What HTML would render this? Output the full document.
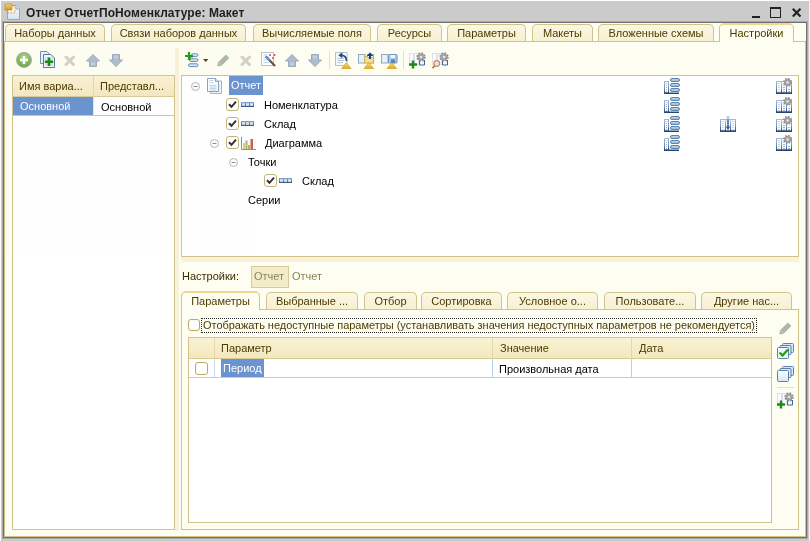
<!DOCTYPE html>
<html><head><meta charset="utf-8">
<style>
*{box-sizing:border-box;margin:0;padding:0}
html,body{width:810px;height:541px;overflow:hidden;background:#cbcbcb}
body{font-family:"Liberation Sans",sans-serif;font-size:11px;color:#000;position:relative}
#root{position:absolute;left:0;top:0;width:810px;height:541px;background:#cbcbcb;will-change:transform;opacity:0.999}
.abs{position:absolute}
.t{position:absolute;white-space:nowrap;line-height:13px;height:13px}
#title{left:26px;top:6px;font-size:12px;font-weight:bold;letter-spacing:0.05px;color:#1e1e1e;line-height:14px;height:14px}
#frame{left:2px;top:21px;width:806px;height:518px;background:#a9a9a9}
#frame2{left:3px;top:22px;width:804px;height:516px;background:#6f6f6f}
#page{left:4px;top:23px;width:802px;height:514px;background:#fefdf1}
#pageb{left:4px;top:41px;width:802px;height:496px;border:1px solid #d2c38a}
#frameL{left:4px;top:22px;width:1px;height:515px;background:#fff}
.tab{position:absolute;top:24px;height:17px;border:1px solid #d2c38a;border-bottom:none;border-radius:5px 5px 0 0;background:linear-gradient(#fbf7e3,#f7f0d2);color:#4b3b00;text-align:center;line-height:16px;white-space:nowrap}
.tab.act{background:#fefdf1;top:23px;height:19px;line-height:17px;z-index:3;border-top:2px solid #f0d791}
.itab{position:absolute;top:292px;height:17px;border:1px solid #d2c38a;border-bottom:none;border-radius:5px 5px 0 0;background:linear-gradient(#fbf7e3,#f7f0d2);color:#4b3b00;text-align:center;line-height:17px;white-space:nowrap}
.itab.act{background:#fefdf1;top:291px;height:19px;line-height:17px;z-index:3;border-top:2px solid #f0d791}
.box{position:absolute;background:#fff;border:1px solid #d2c38a}
.hdr{position:absolute;background:linear-gradient(#f9f2d3,#f3e8bd);color:#4b3b00;border-right:1px solid #e2d8aa;border-bottom:1px solid #d8ca94;line-height:20px;padding-left:6px;white-space:nowrap;overflow:hidden}
.sel{position:absolute;background:#6a93d0;color:#fff;line-height:19px;white-space:nowrap}
.cb{position:absolute;width:13px;height:13px;border:1px solid #b9a866;border-radius:3px;background:#fff}
</style></head><body><div id="root">

<svg width="0" height="0" style="position:absolute">
<defs>
<radialGradient id="gGreen" cx="0.5" cy="0.35" r="0.7"><stop offset="0" stop-color="#b4dc8c"/><stop offset="0.600" stop-color="#7fba55"/><stop offset="1" stop-color="#5f9e3c"/></radialGradient>
<linearGradient id="gPill" x1="0" y1="0" x2="0" y2="1"><stop offset="0" stop-color="#7fa0c0"/><stop offset="0.450" stop-color="#c9dcec"/><stop offset="0.600" stop-color="#b5cce0"/><stop offset="1" stop-color="#6b90b3"/></linearGradient>
<linearGradient id="gDoc" x1="0" y1="0" x2="0" y2="1"><stop offset="0" stop-color="#ffffff"/><stop offset="1" stop-color="#d5e4f3"/></linearGradient>
<linearGradient id="gCol" x1="0" y1="0" x2="0" y2="1"><stop offset="0" stop-color="#eef3f9"/><stop offset="1" stop-color="#b9cbe0"/></linearGradient>
<linearGradient id="gGold" x1="0" y1="0" x2="0" y2="1"><stop offset="0" stop-color="#f3d36a"/><stop offset="1" stop-color="#cf962a"/></linearGradient>
<linearGradient id="gFld" x1="0" y1="0" x2="0" y2="1"><stop offset="0" stop-color="#86a5cb"/><stop offset="0.700" stop-color="#5478a6"/><stop offset="1" stop-color="#2f507a"/></linearGradient>
<linearGradient id="gBord" x1="0" y1="0" x2="0" y2="1"><stop offset="0" stop-color="#a3bbd8"/><stop offset="0.600" stop-color="#6f8fb8"/><stop offset="1" stop-color="#27466f"/></linearGradient>
<linearGradient id="gTri" x1="0" y1="0" x2="0" y2="1"><stop offset="0" stop-color="#fbe27a"/><stop offset="1" stop-color="#e0a820"/></linearGradient>

<symbol id="iUp" viewBox="0 0 14 13"><path d="M7 0.5 L13.5 7 H10.5 V12.5 H3.5 V7 H0.5 Z" fill="#aebccb" stroke="#9aabbd" stroke-width="1" stroke-linejoin="round"/><rect x="5" y="8.5" width="4" height="3" fill="#c3ced9"/></symbol>
<symbol id="iDown" viewBox="0 0 14 13"><path d="M7 12.5 L13.5 6 H10.5 V0.5 H3.5 V6 H0.5 Z" fill="#aebccb" stroke="#9aabbd" stroke-width="1" stroke-linejoin="round"/><rect x="5" y="1.5" width="4" height="3" fill="#c3ced9"/></symbol>
<symbol id="iX" viewBox="0 0 12 12"><path d="M2 2 L9.500 9.500 M9.500 2 L2 9.500" stroke="#d8cec7" stroke-width="3" stroke-linecap="round" fill="none"/></symbol>
<symbol id="iPencil" viewBox="0 0 13 13"><path d="M8.800 1 L11.800 4 L4.500 11.300 L0.800 12 L1.500 8.300 Z" fill="#adb9a8" stroke="#a3b09e" stroke-width="0.800" stroke-linejoin="round"/><path d="M1.3 8 L5 11.7" stroke="#c9d1c5" stroke-width="1"/></symbol>
<symbol id="iGear" viewBox="0 0 10 10"><circle cx="5" cy="5" r="3.6" fill="#9a9a9a" stroke="#8a8a8a" stroke-width="2.2" stroke-dasharray="1.5 1.33"/><circle cx="5" cy="5" r="3.2" fill="#a2a2a2"/><circle cx="5" cy="5" r="1.300" fill="#e6e6e6"/></symbol>
<symbol id="iGearTbl" viewBox="0 0 16 16"><rect x="0.500" y="3.500" width="15" height="11.500" fill="#fbfeff" stroke="url(#gBord)"/><rect x="5" y="4" width="1" height="11" fill="url(#gBord)"/><rect x="10" y="4" width="1" height="11" fill="url(#gBord)"/><path d="M1 5.500 H15" stroke="#cfdef0"/><path d="M2.500 7.500 h1 M2.500 9.500 h1 M2.500 11.500 h1 M2.500 13.500 h1 M7.500 7.500 h1 M7 9.500 h2 M7 11.500 h2 M7 13.500 h2 M12 11.500 h2 M12 13.500 h2" stroke="#9fb3cc" stroke-width="1"/><path d="M0 15.300 H16" stroke="#27466f" stroke-width="1.400"/><use href="#iGear" x="6.800" y="-0.400" width="9.600" height="9.600"/></symbol>
<symbol id="iGrpList" viewBox="0 0 16 16"><path d="M5 12 H15 V15 H5 Z" fill="#e4f4fa"/><rect x="0.500" y="3.500" width="4" height="11.500" fill="#fbfeff" stroke="url(#gBord)"/><path d="M1 5.500 H4" stroke="#cfdef0"/><path d="M2 7.500 h1 M2 9.500 h1 M2 11.500 h1 M2 13.500 h1" stroke="#9fb3cc"/><g fill="url(#gPill)" stroke="#5d84aa" stroke-width="1"><rect x="6.500" y="0.500" width="9" height="3" rx="1.500"/><rect x="6.500" y="5.500" width="9" height="3" rx="1.500"/><rect x="6.500" y="10.500" width="9" height="3" rx="1.500"/></g><path d="M0 15.300 H15" stroke="#27466f" stroke-width="1.400"/></symbol>
<symbol id="iField" viewBox="0 0 13 5"><rect x="0" y="0" width="13" height="5" fill="url(#gFld)"/><rect x="1" y="1.2" width="3" height="2.6" fill="#dbe6f2"/><rect x="5" y="1.2" width="3" height="2.6" fill="#dbe6f2"/><rect x="9" y="1.2" width="3" height="2.6" fill="#dbe6f2"/></symbol>
<symbol id="iChk" viewBox="0 0 13 13"><rect x="0.5" y="0.5" width="12" height="12" rx="2.5" fill="#fff" stroke="#c4b37c"/><path d="M3 6.2 L5.5 8.8 L10 3.6" stroke="#333" stroke-width="2" fill="none" stroke-linejoin="miter"/></symbol>
<symbol id="iColl" viewBox="0 0 9 9"><circle cx="4.5" cy="4.5" r="4" fill="#fff" stroke="#b4b4b4"/><path d="M2.5 4.5 H6.5" stroke="#8c8c8c" stroke-width="1"/></symbol>
<symbol id="iPlusG" viewBox="0 0 8 8"><path d="M4 0 V8 M0 4 H8" stroke="#1f8a12" stroke-width="2.4"/></symbol>
</defs>
</svg>
<div class="abs" style="left:0;top:0;width:810px;height:1px;background:#fff"></div><div class="abs" style="left:0;top:0;width:1px;height:541px;background:#fff"></div><div class="abs" style="left:809px;top:0;width:1px;height:541px;background:#f4f4f4"></div>
<div class="abs" id="frame"></div><div class="abs" id="frame2"></div><div class="abs" id="page"></div><div class="abs" id="pageb"></div>
<div class="t" id="title">Отчет ОтчетПоНоменклатуре: Макет</div>


<!-- title icon + window buttons -->
<svg class="abs" style="left:4px;top:3px" width="17" height="17" viewBox="0 0 17 17"><path d="M3.5 2.5 H12 L15.5 6 V16.5 H3.5 Z" fill="url(#gDoc)" stroke="#8ea8c3"/><path d="M12 2.5 V6 H15.5" fill="#e9f0f7" stroke="#8ea8c3"/><rect x="3" y="3" width="8" height="7" fill="none" stroke="#e0962a" stroke-dasharray="1.5 1.5"/><rect x="1" y="1" width="7" height="6" fill="url(#gGold)" stroke="#c48a22" stroke-width="0.6"/></svg>
<div class="abs" style="left:752px;top:16px;width:8px;height:2px;background:#222"></div>
<div class="abs" style="left:770px;top:7px;width:11px;height:11px;border:1px solid #222;border-top-width:2px"></div>
<svg class="abs" style="left:791px;top:7px" width="11" height="11" viewBox="0 0 11 11"><path d="M1.800 1.800 L9.500 9.500 M9.500 1.800 L1.800 9.500" stroke="#222" stroke-width="2.200" fill="none"/></svg>

<!-- left toolbar -->
<svg class="abs" style="left:16px;top:52px" width="16" height="16" viewBox="0 0 16 16"><circle cx="8" cy="8" r="7.300" fill="url(#gGreen)" stroke="#a3a89c" stroke-width="1.300"/><path d="M8 4 V12 M4 8 H12" stroke="#fff" stroke-width="2.4"/></svg>
<svg class="abs" style="left:40px;top:51px" width="15" height="17" viewBox="0 0 15 17"><path d="M0.5 0.5 H7 L9.5 3 V12.5 H0.5 Z" fill="#eaf1f8" stroke="#6f8fb3"/><path d="M3.5 3.5 H11 L14.5 7 V16.5 H3.5 Z" fill="#f4f8fc" stroke="#557aa5"/><rect x="5" y="6" width="8" height="9" fill="#d6e4f2"/><path d="M9 6.5 V15 M4.8 10.7 H13.2" stroke="#1f8a12" stroke-width="2.6"/></svg>
<svg class="abs" style="left:64px;top:55px" width="12" height="12"><use href="#iX"/></svg>
<svg class="abs" style="left:86px;top:54px" width="14" height="13"><use href="#iUp"/></svg>
<svg class="abs" style="left:109px;top:54px" width="14" height="13"><use href="#iDown"/></svg>

<!-- right toolbar -->
<svg class="abs" style="left:185px;top:52px" width="14" height="16" viewBox="0 0 14 16"><g fill="#dfe9f4" stroke="#5e88b8" stroke-width="1"><rect x="6.500" y="1.800" width="6.500" height="2.600" rx="1.300"/><rect x="4.500" y="6.800" width="8.500" height="2.600" rx="1.300"/><rect x="3.500" y="11.800" width="9.500" height="2.800" rx="1.400"/></g><path d="M4 0 V8 M0 4 H8" stroke="#22a012" stroke-width="2.200"/><path d="M5.100 4.900 V8 M5.100 5.100 H8" stroke="#187a0c" stroke-width="0.600" fill="none"/></svg>
<svg class="abs" style="left:203px;top:59px" width="6" height="4" viewBox="0 0 6 4"><path d="M0 0 H5.400 L2.700 3 Z" fill="#5a4410"/></svg>
<svg class="abs" style="left:217px;top:54px" width="13" height="13"><use href="#iPencil"/></svg>
<svg class="abs" style="left:240px;top:55px" width="12" height="12"><use href="#iX"/></svg>
<svg class="abs" style="left:261px;top:52px" width="16" height="16" viewBox="0 0 16 16"><rect x="0.500" y="0.500" width="12" height="13" fill="#fafcfe" stroke="#b3c2d4"/><path d="M2.500 3 H6 M2.500 5.500 H4.500 M2.500 8 H6 M2.500 10.500 H8.500" stroke="#c3d0df"/><path d="M5 4.500 L14 14" stroke="#6b4a35" stroke-width="2"/><path d="M4.700 4.200 L8.500 8.200" stroke="#4e97de" stroke-width="2.200"/><path d="M8 3 h2 M9 2 v2 M12.500 3 h2 M13.500 2 v2 M11 6 h2 M12 5 v2" stroke="#e8483c" stroke-width="1"/></svg>
<svg class="abs" style="left:285px;top:54px" width="14" height="13"><use href="#iUp"/></svg>
<svg class="abs" style="left:308px;top:54px" width="14" height="13"><use href="#iDown"/></svg>
<div class="abs" style="left:329px;top:51px;width:1px;height:18px;background:#e9e1bd"></div>
<svg class="abs" style="left:335px;top:52px" width="17" height="17" viewBox="0 0 17 17"><rect x="0.500" y="0.500" width="11.500" height="13" fill="#f7fafc" stroke="#b3c1d1"/><path d="M2.500 6.500 H9 M2.500 8.500 H9 M2.500 10.500 H8" stroke="#bccadb"/><path d="M11.500 9 C11.800 5.500 9.500 3.200 6.500 3.300" stroke="#1f4e86" stroke-width="1.800" fill="none"/><path d="M7.300 0.300 L3.300 3.300 L7.300 6.300 Z" fill="#1f4e86"/><path d="M6.500 16.500 L11.300 10.800 L16 16.500 Z" fill="url(#gTri)" stroke="#dda21f" stroke-width="0.800"/></svg>
<svg class="abs" style="left:358px;top:52px" width="17" height="17" viewBox="0 0 17 17"><rect x="0.500" y="2.500" width="6.500" height="8.500" fill="#e9f0f8" stroke="#8fa9c6"/><rect x="9.500" y="2.500" width="6" height="8.500" fill="#e9f0f8" stroke="#8fa9c6"/><path d="M6.500 4.500 H9 L10 5.500 H15.500 V11 H6.500 Z" fill="#f2de9a" stroke="#c9a648" stroke-width="0.800"/><path d="M12 7 V3" stroke="#1c3f6e" stroke-width="2"/><path d="M8.800 4 L12 0.300 L15.200 4 Z" fill="#1c3f6e"/><path d="M6 16.500 L10.800 10.800 L15.600 16.500 Z" fill="url(#gTri)" stroke="#dda21f" stroke-width="0.800"/></svg>
<svg class="abs" style="left:381px;top:52px" width="17" height="17" viewBox="0 0 17 17"><rect x="0.500" y="2.500" width="6.500" height="8.500" fill="#e9f0f8" stroke="#8fa9c6"/><rect x="7.500" y="2.500" width="8.500" height="8.500" rx="0.800" fill="#a9c8e8" stroke="#6f96c0"/><rect x="9.500" y="3" width="4.500" height="3" fill="#f4f8fc"/><rect x="10" y="7.500" width="4" height="3.500" fill="#5f82ad"/><path d="M6 16.500 L10.800 10.800 L15.600 16.500 Z" fill="url(#gTri)" stroke="#dda21f" stroke-width="0.800"/></svg>
<div class="abs" style="left:403px;top:51px;width:1px;height:18px;background:#e9e1bd"></div>
<svg class="abs" style="left:409px;top:52px" width="17" height="17" viewBox="0 0 17 17"><g fill="#f8fafd" stroke="#b7c7da" stroke-width="1" stroke-dasharray="1 1"><rect x="0.500" y="1.500" width="4" height="11"/><rect x="5.500" y="1.500" width="4" height="11"/></g><path d="M10.500 8 V13 H15.500 V8" fill="#f1f5fa" stroke="#3d6594"/><use href="#iGear" x="7" y="0" width="10" height="10"/><path d="M4 8.500 V16.5 M0 12.5 H8" stroke="#1f8a12" stroke-width="2.4"/></svg>
<svg class="abs" style="left:432px;top:52px" width="17" height="17" viewBox="0 0 17 17"><g fill="#f8fafd" stroke="#b7c7da" stroke-width="1" stroke-dasharray="1 1"><rect x="0.500" y="1.500" width="4" height="11"/><rect x="5.500" y="1.500" width="4" height="11"/></g><path d="M10.500 8 V13 H15.500 V8" fill="#f1f5fa" stroke="#3d6594"/><use href="#iGear" x="7" y="0" width="10" height="10"/><circle cx="4.800" cy="11.5" r="2.800" fill="#f3e3d8" stroke="#c98a6a" stroke-width="1.2"/><path d="M2.800 13.500 L0.500 16.200" stroke="#b0703f" stroke-width="1.6"/></svg>

<!-- top tabs -->
<div class="tab" style="left:5px;width:100px">Наборы данных</div>
<div class="tab" style="left:111px;width:135px">Связи наборов данных</div>
<div class="tab" style="left:253px;width:118px">Вычисляемые поля</div>
<div class="tab" style="left:377px;width:65px">Ресурсы</div>
<div class="tab" style="left:447px;width:79px">Параметры</div>
<div class="tab" style="left:532px;width:61px">Макеты</div>
<div class="tab" style="left:598px;width:116px">Вложенные схемы</div>
<div class="tab act" style="left:719px;width:75px">Настройки</div>

<!-- left panel -->
<div class="box" style="left:12px;top:75px;width:163px;height:455px"></div>
<div class="hdr" style="left:13px;top:76px;width:81px;height:21px">Имя вариа...</div>
<div class="hdr" style="left:94px;top:76px;width:80px;height:21px;border-right:none">Представл...</div>
<div class="sel" style="left:13px;top:97px;width:80px;height:18px;padding-left:7px;line-height:19px">Основной</div>
<div class="t" style="left:101px;top:101px">Основной</div>
<div class="abs" style="left:93px;top:97px;width:1px;height:18px;background:#dbe7f7"></div>
<div class="abs" style="left:13px;top:115px;width:161px;height:1px;background:#aec8ea"></div>

<!-- splitter -->
<div class="abs" style="left:175px;top:48px;width:4px;height:483px;background:#f8f2d8"></div>
<div class="abs" style="left:181px;top:257px;width:618px;height:5px;background:#f8f2d8"></div>

<!-- tree box -->
<div class="box" style="left:181px;top:75px;width:618px;height:182px"></div>
<div class="sel" style="left:229px;top:76px;width:34px;height:19px;padding-left:2px">Отчет</div>
<div class="t" style="left:264px;top:99px">Номенклатура</div>
<div class="t" style="left:264px;top:118px">Склад</div>
<div class="t" style="left:265px;top:137px">Диаграмма</div>
<div class="t" style="left:248px;top:156px">Точки</div>
<div class="t" style="left:302px;top:175px">Склад</div>
<div class="t" style="left:248px;top:194px">Серии</div>


<!-- tree icons -->
<svg class="abs" style="left:191px;top:82px" width="9" height="9"><use href="#iColl"/></svg>
<svg class="abs" style="left:207px;top:78px" width="16" height="17" viewBox="0 0 16 17"><path d="M3.500 3 H14.500 V15.500 H3.500 Z" fill="#eef3f9" stroke="#9fb6cf"/><path d="M0.500 0.500 H8.500 L11.500 3.500 V13.500 H0.500 Z" fill="#fbfdff" stroke="#86a4c2"/><path d="M8.500 0.500 V3.500 H11.500" fill="#e4edf6" stroke="#86a4c2"/><path d="M2.500 2.500 H6.500 M2.500 4.500 H6.500 M2.500 7.500 H9.500 M2.500 9 H9.500 M2.500 10.500 H9.500 M2.500 12 H9.500" stroke="#bcd0e5" stroke-width="0.900"/></svg>
<svg class="abs" style="left:226px;top:98px" width="13" height="13"><use href="#iChk"/></svg>
<svg class="abs" style="left:241px;top:102px" width="13" height="5"><use href="#iField"/></svg>
<svg class="abs" style="left:226px;top:117px" width="13" height="13"><use href="#iChk"/></svg>
<svg class="abs" style="left:241px;top:121px" width="13" height="5"><use href="#iField"/></svg>
<svg class="abs" style="left:210px;top:139px" width="9" height="9"><use href="#iColl"/></svg>
<svg class="abs" style="left:226px;top:136px" width="13" height="13"><use href="#iChk"/></svg>
<svg class="abs" style="left:241px;top:137px" width="15" height="13" viewBox="0 0 15 13"><path d="M0.500 0 V12.500 H15" stroke="#8f8f8f" fill="none"/><rect x="2" y="6" width="2" height="6" fill="#dccb6e"/><rect x="4.500" y="3.500" width="2" height="8.500" fill="#93bd7c"/><rect x="7" y="8" width="2" height="4" fill="#d9a85a"/><rect x="9.500" y="2" width="2.500" height="10" fill="#c4664f"/></svg>
<svg class="abs" style="left:229px;top:158px" width="9" height="9"><use href="#iColl"/></svg>
<svg class="abs" style="left:264px;top:174px" width="13" height="13"><use href="#iChk"/></svg>
<svg class="abs" style="left:279px;top:178px" width="13" height="5"><use href="#iField"/></svg>

<!-- right column icons -->
<svg class="abs" style="left:664px;top:78px" width="16" height="16"><use href="#iGrpList"/></svg>
<svg class="abs" style="left:664px;top:97px" width="16" height="16"><use href="#iGrpList"/></svg>
<svg class="abs" style="left:664px;top:116px" width="16" height="16"><use href="#iGrpList"/></svg>
<svg class="abs" style="left:664px;top:135px" width="16" height="16"><use href="#iGrpList"/></svg>
<svg class="abs" style="left:776px;top:78px" width="16" height="16"><use href="#iGearTbl"/></svg>
<svg class="abs" style="left:776px;top:97px" width="16" height="16"><use href="#iGearTbl"/></svg>
<svg class="abs" style="left:776px;top:116px" width="16" height="16"><use href="#iGearTbl"/></svg>
<svg class="abs" style="left:776px;top:135px" width="16" height="16"><use href="#iGearTbl"/></svg>
<svg class="abs" style="left:720px;top:116px" width="16" height="16" viewBox="0 0 16 16"><rect x="0.500" y="3.500" width="15" height="11.500" fill="#fbfeff" stroke="url(#gBord)"/><rect x="5" y="4" width="1" height="11" fill="url(#gBord)"/><rect x="10" y="4" width="1" height="11" fill="url(#gBord)"/><path d="M1 5.500 H15" stroke="#cfdef0"/><path d="M2.500 7.500 h1 M2.500 9.500 h1 M2.500 11.500 h1 M2.500 13.500 h1 M12.500 7.500 h1 M12.500 9.500 h1 M12.500 11.500 h1 M12.500 13.500 h1" stroke="#9fb3cc"/><path d="M0 15.300 H16" stroke="#27466f" stroke-width="1.400"/><path d="M8 3.500 V12" stroke="#2a5a95" stroke-width="1.400"/><path d="M5.800 10.500 L8 14.300 L10.200 10.500 Z" fill="#2a5a95"/><path d="M7 0.300 L9 2.600 M9 0.300 L7 2.600" stroke="#5f8bc0" stroke-width="0.800"/></svg>

<!-- side icons -->
<svg class="abs" style="left:779px;top:322px" width="13" height="13"><use href="#iPencil"/></svg>
<svg class="abs" style="left:777px;top:343px" width="17" height="16" viewBox="0 0 17 16"><g fill="#d9e6f4" stroke="#5a82b0"><rect x="5.500" y="0.500" width="11" height="9" rx="1"/><rect x="3" y="2.500" width="11" height="9" rx="1"/><rect x="0.500" y="4.500" width="11" height="11" rx="1" fill="#f2f7fc"/></g><path d="M2.500 9.500 L5.500 12.500 L11 6.500" stroke="#2f9a1c" stroke-width="2.400" fill="none"/></svg>
<svg class="abs" style="left:777px;top:366px" width="17" height="16" viewBox="0 0 17 16"><g fill="#d9e6f4" stroke="#5a82b0"><rect x="5.500" y="0.500" width="11" height="9" rx="1"/><rect x="3" y="2.500" width="11" height="9" rx="1"/><rect x="0.500" y="4.500" width="11" height="11" rx="1" fill="url(#gDoc)"/></g></svg>
<div class="abs" style="left:777px;top:387px;width:17px;height:1px;background:#e9e1bd"></div>
<svg class="abs" style="left:777px;top:392px" width="17" height="17" viewBox="0 0 17 17"><g fill="#f8fafd" stroke="#b7c7da" stroke-width="1" stroke-dasharray="1 1"><rect x="0.500" y="1.500" width="4" height="11"/><rect x="5.500" y="1.500" width="4" height="11"/></g><path d="M10.500 8 V13 H15.500 V8" fill="#f1f5fa" stroke="#3d6594"/><use href="#iGear" x="7" y="0" width="10" height="10"/><path d="M4 8.500 V16.500 M0 12.500 H8" stroke="#1f8a12" stroke-width="2.400"/></svg>

<!-- settings label row -->
<div class="t" style="left:182px;top:270px;color:#3a2e00">Настройки:</div>
<div class="abs" style="left:251px;top:266px;width:38px;height:22px;background:#f3ecc9;border:1px solid #d6cb9d"></div>
<div class="t" style="left:254px;top:270px;color:#8c8458">Отчет</div>
<div class="t" style="left:292px;top:270px;color:#8c8458">Отчет</div>

<!-- inner tabs -->
<div class="abs" style="left:181px;top:309px;width:618px;height:221px;border:1px solid #d2c38a"></div>
<div class="itab act" style="left:181px;width:79px">Параметры</div>
<div class="itab" style="left:266px;width:92px">Выбранные ...</div>
<div class="itab" style="left:364px;width:53px">Отбор</div>
<div class="itab" style="left:421px;width:81px">Сортировка</div>
<div class="itab" style="left:507px;width:91px">Условное о...</div>
<div class="itab" style="left:604px;width:92px">Пользовате...</div>
<div class="itab" style="left:701px;width:91px">Другие нас...</div>

<!-- checkbox line -->
<div class="cb" style="left:188px;top:319px;width:12px;height:12px"></div>
<div class="t" style="left:201px;top:318px;padding:0 2px;outline:1px dotted #222;outline-offset:-1px;height:15px;line-height:15px;color:#4b3b00;letter-spacing:-0.03px">Отображать недоступные параметры (устанавливать значения недоступных параметров не рекомендуется)</div>

<!-- param table -->
<div class="box" style="left:188px;top:337px;width:584px;height:186px"></div>
<div class="hdr" style="left:189px;top:338px;width:26px;height:21px"></div>
<div class="hdr" style="left:215px;top:338px;width:278px;height:21px">Параметр</div>
<div class="hdr" style="left:493px;top:338px;width:139px;height:21px;padding-left:7px">Значение</div>
<div class="hdr" style="left:632px;top:338px;width:139px;height:21px;border-right:none;padding-left:7px">Дата</div>
<div class="cb" style="left:195px;top:362px"></div>
<div class="sel" style="left:221px;top:359px;width:43px;height:18px;padding-left:2px;line-height:18px">Период</div>
<div class="t" style="left:499px;top:363px">Произвольная дата</div>
<div class="abs" style="left:214px;top:359px;width:1px;height:18px;background:#c9daf2"></div>
<div class="abs" style="left:492px;top:359px;width:1px;height:18px;background:#b5cdee"></div>
<div class="abs" style="left:631px;top:359px;width:1px;height:18px;background:#b5cdee"></div>
<div class="abs" style="left:189px;top:377px;width:582px;height:1px;background:#b5cdee"></div>

</div></body></html>
